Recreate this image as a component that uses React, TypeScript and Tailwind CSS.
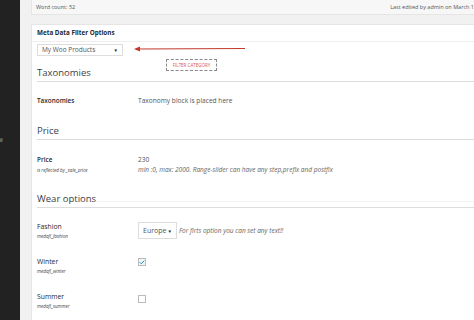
import { Check } from "lucide-react";

const font = { fontFamily: '"Open Sans", "Liberation Sans", sans-serif' };

const Heading = ({ children }: { children: string }) => (
  <div className="border-b border-[#dcdcdc] pb-[2px] text-[9.5px] leading-[12px] text-[#3c4146]">{children}</div>
);

const Row = ({ label, sub, bold, children }: { label: string; sub?: string; bold?: boolean; children: React.ReactNode }) => (
  <div className="flex">
    <div className="w-[101px] shrink-0">
      <div className={bold ? "text-[6.4px] leading-[10px] font-semibold text-[#23282d]" : "text-[6.8px] leading-[10px] text-[#23282d]"}>
        {label}
      </div>
      {sub && <div className="text-[4.6px] leading-[8px] italic text-[#444]">{sub}</div>}
    </div>
    <div className="flex-1 text-[6.6px] leading-[10px] text-[#555]">{children}</div>
  </div>
);

export default function App() {
  return (
    <div className="flex w-[474px] h-[320px] overflow-hidden bg-[#f1f1f1]" style={font}>
      <div className="w-[20px] shrink-0 bg-[#222] relative">
        <span className="absolute left-0 top-[137px] text-[5px] text-[#ddd]">il</span>
      </div>
      <div className="flex-1 pl-[11px]">
        <div className="h-[15px] bg-[#f7f7f7] border border-t-0 border-r-0 border-[#e5e5e5] flex items-center justify-between pl-[4px] text-[5.5px] text-[#555]">
          <span>Word count: 52</span>
          <span className="whitespace-nowrap">Last edited by admin on March 1</span>
        </div>
        <div className="mt-[9px] bg-white border border-r-0 border-[#e5e5e5] h-[300px] relative">
          <div className="border-b border-[#eee] pl-[5px] pt-[3px] pb-[3px] text-[6.3px] leading-[10px] font-bold text-[#23282d]">
            Meta Data Filter Options
          </div>
          <div className="pl-[5px] pt-[2px]">
            <div className="w-[86px] h-[12px] border border-[#ddd] flex items-center justify-between px-[4px] text-[6.5px] text-[#555]">
              <span>My Woo Products</span>
              <span className="text-[4.5px] text-[#222]">▼</span>
            </div>
            <div className="mt-[11px]">
              <Heading>Taxonomies</Heading>
            </div>
            <div className="mt-[14px]">
              <Row label="Taxonomies" bold>Taxonomy block is placed here</Row>
            </div>
            <div className="mt-[19px]">
              <Heading>Price</Heading>
            </div>
            <div className="mt-[15px] border-b border-[#f4f4f4] pb-[26px]">
              <div className="flex">
                <div className="w-[101px] shrink-0">
                  <div className="text-[6.4px] leading-[10px] font-semibold text-[#23282d]">Price</div>
                  <div className="text-[4.6px] leading-[10px] italic text-[#444]">is reflected by _sale_price</div>
                </div>
                <div className="flex-1 text-[6.6px] leading-[10px] text-[#555]">
                  <div>230</div>
                  <div className="italic text-[6.5px] text-[#666]">
                    min :0, max: 2000. Range-slider can have any step,prefix and postfix
                  </div>
                </div>
              </div>
            </div>
            <div className="-mt-[9px]">
              <Heading>Wear options</Heading>
            </div>
            <div className="mt-[14px] flex flex-col gap-[17px]">
              <Row label="Fashion" sub="medafi_fashion">
                <div className="flex items-center gap-[2px]">
                  <div className="w-[39px] h-[17px] border border-[#ddd] flex items-center justify-between px-[4px] text-[7px] text-[#555]">
                    <span>Europe</span>
                    <span className="text-[4.5px] text-[#222]">▼</span>
                  </div>
                  <span className="italic text-[6.5px] text-[#666]">For firts option you can set any text!!</span>
                </div>
              </Row>
              <Row label="Winter" sub="medafi_winter">
                <div className="w-[8px] h-[8px] border border-[#bbb] bg-[#eef6fa] flex items-center justify-center mt-[1px]">
                  <Check className="w-[7px] h-[7px] text-[#1e8cbe]" strokeWidth={4} />
                </div>
              </Row>
              <Row label="Summer" sub="medafi_summer">
                <div className="w-[8px] h-[8px] border border-[#bbb] bg-white mt-[3px]" />
              </Row>
            </div>
          </div>

          <div className="absolute left-[102px] top-[21px] w-[111px] h-[6px] flex items-center">
            <svg width="111" height="6" viewBox="0 0 111 6">
              <line x1="4" y1="3" x2="111" y2="2.5" stroke="#c0392b" strokeWidth="1.2" />
              <polygon points="0,3 6,0.5 6,5.5" fill="#c0392b" />
            </svg>
          </div>
          <div className="absolute left-[134px] top-[34px] w-[51px] h-[12px] border border-dashed border-[#888] flex items-center justify-center text-[4.5px] text-[#d9534f]">
            FILTER CATEGORY
          </div>
        </div>
      </div>
    </div>
  );
}
